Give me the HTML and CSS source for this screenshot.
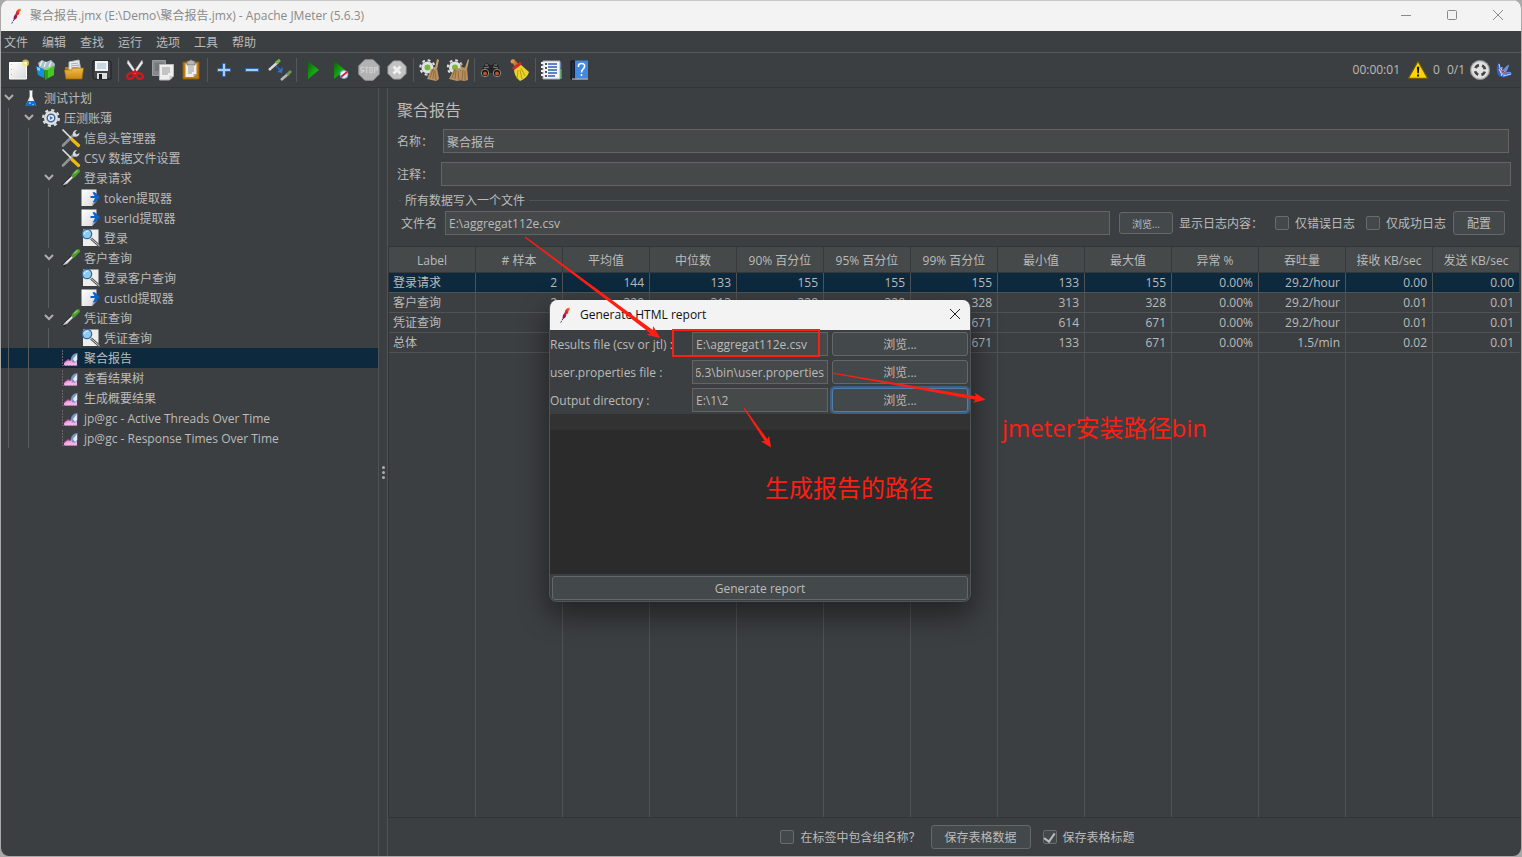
FILE: index.html
```html
<!DOCTYPE html>
<html lang="zh-CN">
<head>
<meta charset="utf-8">
<title>聚合报告.jmx (E:\Demo\聚合报告.jmx) - Apache JMeter (5.6.3)</title>
<link rel="stylesheet" href="styles.css">
</head>
<body>
<svg class="sprite" aria-hidden="true">
  <defs>
    <linearGradient id="g-feather" x1="1" y1="0" x2="0" y2="1"><stop offset="0" stop-color="#f7a01d"/><stop offset=".35" stop-color="#e0342a"/><stop offset=".7" stop-color="#b5173c"/><stop offset="1" stop-color="#4b1d7c"/></linearGradient>
    <linearGradient id="g-green" x1="0" y1="0" x2="1" y2="1"><stop offset="0" stop-color="#0a5f0a"/><stop offset=".5" stop-color="#12a012"/><stop offset="1" stop-color="#19d019"/></linearGradient>
    <linearGradient id="g-folder" x1="0" y1="0" x2="0" y2="1"><stop offset="0" stop-color="#f0bd4e"/><stop offset="1" stop-color="#c98a12"/></linearGradient>
    <linearGradient id="g-paper" x1="0" y1="0" x2="1" y2="1"><stop offset="0" stop-color="#fff"/><stop offset="1" stop-color="#d8d8d8"/></linearGradient>
    <linearGradient id="g-flask" x1="0" y1="0" x2="1" y2="0"><stop offset="0" stop-color="#9aa2a8"/><stop offset=".5" stop-color="#fff"/><stop offset="1" stop-color="#a9b0b5"/></linearGradient>
    <symbol id="i-feather" viewBox="0 0 16 16"><path d="M10.500 1 12.500 .5 13 2.500 11.500 4 11 6.500 9.500 7 8.800 10 6.500 12 5.500 11 6 8 7.500 6 8.500 3Z" fill="url(#g-feather)"/><path d="M6 11.500 3.800 15.500" stroke="#4b1d7c" stroke-dasharray="2 1"/></symbol>
    <symbol id="i-new" viewBox="0 0 24 24"><path d="M3.500 4.500h17v16.500h-17z" fill="url(#g-paper)" stroke="#fff"/><path d="M5.500 6v14" stroke="#bbb" stroke-dasharray="1 4"/><circle cx="19.500" cy="5" r="3.500" fill="#f3e66a" opacity=".75"/><circle cx="19.500" cy="5" r="1.500" fill="#fffbc0"/></symbol>
    <symbol id="i-templates" viewBox="0 0 24 24"><path d="M4 5 8 2l4 2 5-2 4 4-1 6H6Z" fill="#a9bfc6"/><path d="m6 8 2-5M10 9l2-5m3 5 2-5" stroke="#e8eef0" stroke-width="1.500"/><path d="m2 8 8 3v9L4 17Z" fill="#168fdc"/><path d="M3 9l3 1v3l-3-1z" fill="#7ccaf5"/><path d="m10 12 10-4v9l-9 5Z" fill="#25a515"/><path d="m10 12 5-3 5-1-6 4Z" fill="#83df4c"/><path d="m14 12 6-4v9l-6 3Z" fill="#46c727"/></symbol>
    <symbol id="i-open" viewBox="0 0 24 24"><path d="M3 9h5v11H4Z" fill="#b9790c"/><path d="m7 4 10-2 2 11H7Z" fill="#eee" stroke="#bbb"/><path d="m9 6 7-1M9 8l8-1M9 10l8-1" stroke="#aaa"/><path d="M2.500 12h7l1-2h11l-1.500 11H4Z" fill="url(#g-folder)" stroke="#a26b0b" stroke-width=".7"/></symbol>
    <symbol id="i-save" viewBox="0 0 24 24"><path d="M3 3h17l1 1v17H4l-1-1Z" fill="#42464a" stroke="#1e1f20"/><path d="M5 3h13v10H5z" fill="#f0f4f7"/><path d="M7 6h9M7 8h9M7 10h9" stroke="#9db7cd"/><path d="M7 15h10v6H7z" fill="#ddd"/><path d="M9 16h3v5H9z" fill="#1b1c1d"/></symbol>
    <symbol id="i-cut" viewBox="0 0 24 24"><path d="m5 2 9 13-2 1L4 5Zm14 0-9 13 2 1 8-11Z" fill="#ececec" stroke="#999" stroke-width=".5"/><ellipse cx="7.500" cy="18" rx="3.500" ry="2.700" fill="none" stroke="#d8171c" stroke-width="2.200" transform="rotate(-25 7.500 18)"/><ellipse cx="16.500" cy="18" rx="3.500" ry="2.700" fill="none" stroke="#d8171c" stroke-width="2.200" transform="rotate(25 16.500 18)"/><path d="m9 16 3-3 3 3" stroke="#d8171c" stroke-width="2" fill="none"/></symbol>
    <symbol id="i-copy" viewBox="0 0 24 24"><path d="M1.500 2.500h13v15h-13z" fill="#85898a" stroke="#9b9e9f"/><path d="M4 6h8M4 8h8M4 10h8M4 12h8" stroke="#626668"/><path d="M8.500 6.500h14V18l-4 4h-10z" fill="#eee" stroke="#bbb"/><path d="M11 10h8M11 12h8M11 14h8M11 16h6" stroke="#999"/><path d="M18.500 22v-4h4" fill="#ccc"/></symbol>
    <symbol id="i-paste" viewBox="0 0 24 24"><path d="M4 4h16v17H4z" fill="#c17d11" stroke="#8f5902"/><path d="M6.500 5.500h11V16l-3 3h-8z" fill="#f0f0ee"/><path d="M9 9h6M9 11h6M9 13h6M9 15h4" stroke="#999"/><path d="M8 3h2l1-1h2l1 1h2v4H8z" fill="#b5b7b3" stroke="#666" stroke-width=".7"/><path d="m14.500 19v-3h3" fill="#aaa"/></symbol>
    <symbol id="i-plus" viewBox="0 0 24 24"><path d="M10.500 5.500h3v5h5v3h-5v5h-3v-5h-5v-3h5z" fill="#a9ccf3" stroke="#2e68b4"/></symbol>
    <symbol id="i-minus" viewBox="0 0 24 24"><path d="M5.500 10.500h13v3h-13z" fill="#a9ccf3" stroke="#2e68b4"/></symbol>
    <symbol id="i-toggle" viewBox="0 0 24 24"><path d="m1 12 9-8" stroke="#d8dbd8" stroke-width="2.500"/><path d="m8 5 4-3" stroke="#72b64c" stroke-width="3"/><path d="m13 22 7-6" stroke="#b8bbb8" stroke-width="2.500"/><path d="m19 17 4-4" stroke="#72955a" stroke-width="3"/><path d="m8 8 5 5" stroke="#2573d9" stroke-width="1.500" stroke-dasharray="2 1"/><path d="m15 9-1 6-5-1Z" fill="#2573d9"/></symbol>
    <symbol id="i-start" viewBox="0 0 24 24"><path d="M7 3v18l11-9Z" fill="url(#g-green)"/></symbol>
    <symbol id="i-start-np" viewBox="0 0 24 24"><path d="M5 3v18l11-9Z" fill="url(#g-green)"/><circle cx="15" cy="16.500" r="4" fill="#e9f1fb" stroke="#7ba5d8"/><path d="m12 19 6-5" stroke="#d2222a" stroke-width="1.700"/></symbol>
    <symbol id="i-stop" viewBox="-1 -1 26 26"><path d="M7.500 1h9L23 7.500v9L16.500 23h-9L1 16.500v-9Z" fill="#b2b2b2" stroke="#a5a5a5"/><g fill="none" stroke="#cfcfcf" stroke-width="1.300"><path d="M6.500 9.500Q3 8 3 10.500T6 12.500 3 15M7.500 9h4m-2 0v6.500M13 9.500h2.500v5.500H13zM18 15.500V9.500h3V12h-3"/></g></symbol>
    <symbol id="i-shutdown" viewBox="0 0 24 24"><path d="M8.500 3h7L21 8.500v7L15.500 21h-7L3 15.500v-7Z" fill="#c2c2c2" stroke="#a5a5a5"/><path d="m8.500 8.500 7 7m0-7-7 7" stroke="#f1f1f1" stroke-width="2.800"/></symbol>
    <symbol id="i-clear" viewBox="0 0 24 24"><circle cx="9.500" cy="9.500" r="6" fill="#dfe3e4"/><circle cx="9.500" cy="9.500" r="7.200" fill="none" stroke="#dfe3e4" stroke-width="2" stroke-dasharray="2.800 2.850"/><circle cx="9.500" cy="9.500" r="3" fill="#78b83a"/><path d="m17 10 2-9 2 1-2 9Z" fill="#c9a26b"/><path d="m13 11 6-1 2 11-3 2-9-2Z" fill="#b9905d"/><path d="m12 20 3-9m0 10 1-9m2 10-1-9" stroke="#7f5d36" stroke-width=".7"/></symbol>
    <symbol id="i-clear-all" viewBox="0 0 24 24"><circle cx="9" cy="9.500" r="6" fill="#dfe3e4"/><circle cx="9" cy="9.500" r="7.200" fill="none" stroke="#dfe3e4" stroke-width="2" stroke-dasharray="2.800 2.850"/><circle cx="9" cy="9.500" r="3" fill="#78b83a"/><path d="m14 10 1-6 1 1-1 6Zm5 0 3-9 1 1-2 9Z" fill="#c9a26b"/><path d="m8 11 6-1 2 12-5 1-8-2Zm7-1 6-1 1 13-4 1-4-1Z" fill="#b9905d"/><path d="m6 20 3-9m0 10 1-9m3 10-1-9m4 9 1-10m2 10v-9" stroke="#7f5d36" stroke-width=".7"/></symbol>
    <symbol id="i-search" viewBox="0 0 24 24"><path d="M5 7 8 5l3 2 2 0 3-2 3 2 3 8-4 4-5-4h-2l-5 4-4-4Z" fill="#242425"/><path d="M6 7 9 7M15 7h3M5 10l5-1m4 0 5 1" stroke="#888"/><circle cx="6" cy="15" r="3.700" fill="#111" stroke="#8b8b8b"/><circle cx="18" cy="15" r="3.700" fill="#111" stroke="#8b8b8b"/><circle cx="6" cy="15.500" r="2" fill="#b5572a"/><circle cx="18" cy="15.500" r="2" fill="#b5572a"/></symbol>
    <symbol id="i-reset" viewBox="0 0 24 24"><path d="m4 2 3-1 6 7-4 3Z" fill="#c57b28"/><circle cx="5.500" cy="3.500" r="2" fill="#da994c"/><path d="m7 11 6-5 9 8c-1 4-4 7-9 9-4-3-6-7-6-12Z" fill="#e9d32c"/><path d="m10 21 1-9m4 9-2-9m5 6-4-8" stroke="#a98e09" stroke-width=".8"/><path d="m6 11 8-6" stroke="#cf2929" stroke-width="3"/></symbol>
    <symbol id="i-log" viewBox="0 0 24 24"><path d="M18 5h4v5h-4z" fill="#2357b9"/><path d="M18 11h4v10h-4z" fill="#20a33b"/><path d="M3 3h17v18H3z" fill="#f4f5f6" stroke="#aaa"/><path d="M8 6h9M8 9h9M8 12h9M8 15h9M8 18h7" stroke="#315cae" stroke-width="1.300"/><path d="M1 5h5M1 9h5M1 13h5M1 17h5" stroke="#eee" stroke-width="2"/><path d="M5 6h2M5 10h2M5 14h2M5 18h2" stroke="#222" stroke-width="1.500"/></symbol>
    <symbol id="i-help" viewBox="0 0 24 24"><path d="M3 3h4v18H3z" fill="#1d2d48" stroke="#111"/><path d="M7 2.500h13v18H7z" fill="#4289df"/><path d="M4 21h16" stroke="#ddd"/><path d="M10.500 9Q10 5.500 13.500 5.500T16.500 8.500C16.500 11 13.500 11 13.500 14.500M13.500 16v2" fill="none" stroke="#fff" stroke-width="1.600"/></symbol>
    <symbol id="i-warn" viewBox="0 0 24 24"><path d="M12 2.500 22.500 21h-21Z" fill="#ffd400" stroke="#6b5b00" stroke-width="1.300" stroke-linejoin="round"/><path d="M10.800 8.500h2.600l-.5 7h-1.600zM11 17h2.200v2.200H11z" fill="#111"/></symbol>
    <symbol id="i-threads" viewBox="0 0 24 24"><circle cx="12" cy="12" r="10.500" fill="#c9c9c9" stroke="#8b8b8b"/><circle cx="12" cy="12" r="8.800" fill="#e2e2e2"/><circle cx="12" cy="12" r="5.500" fill="none" stroke="#444" stroke-width="3" stroke-dasharray="5 3.640" stroke-dashoffset="-1.800"/></symbol>
    <symbol id="i-wing" viewBox="0 0 18 18"><path d="M4 1.500C1 5 1 11 4 15l5 1.500 7-2.500c1-1 1-1.500 1-2H8Z" fill="#2f62cc"/><path d="m4 3 2 8M7 6l-1 6M12 7l-6 8m10-2-8 2m-4-7 3 6" stroke="#c9dcff"/><path d="M7 10c3-1 4-4 6-5-1 4-2 6-5 8M8 14c3-3 5-3 8-2" fill="none" stroke="#668fe7" stroke-width="1.500"/><path d="m5 8 3 4 3-1" fill="none" stroke="#c44"/></symbol>
    <symbol id="i-flask" viewBox="0 0 20 20"><path d="M8 2.500h4l-.6 1v5L15.500 18h-11L8.600 8.500v-5Z" fill="url(#g-flask)"/><path d="M6.600 13h6.800l2.100 5h-11Z" fill="#1668d8"/><circle cx="9" cy="15" r="1" fill="#8fc0ff"/><circle cx="12" cy="16.500" r=".8" fill="#8fc0ff"/></symbol>
    <symbol id="i-gear" viewBox="0 0 20 20"><circle cx="10" cy="10" r="7.900" fill="none" stroke="#d9dddf" stroke-width="2.200" stroke-dasharray="3.100 3.100"/><circle cx="10" cy="10" r="7" fill="#dfe2e4"/><circle cx="10" cy="10" r="3.800" fill="#e9f0fa" stroke="#4a6894" stroke-width="1.500"/><path d="m8.800 8 3.400 2-3.400 2Z" fill="#3c72c4"/></symbol>
    <symbol id="i-tools" viewBox="0 0 20 20"><path d="m2 17.500 11-11" stroke="#8f9293" stroke-width="2.600" stroke-linecap="round"/><path d="M12 7.500c-1-3 1-5.500 4-5.500l-2 2.500 1.500 2L18.500 5c0 3-3 4.500-5.500 3.500Z" fill="#d5d7d8"/><path d="m1.500 1.500 9 9" stroke="#e3e5e6" stroke-width="1.600"/><path d="m11 11.500 6.500 6" stroke="#f1b80d" stroke-width="3.200" stroke-linecap="round"/></symbol>
    <symbol id="i-dropper" viewBox="0 0 20 20"><path d="M2 18 13 7" stroke="#26282a" stroke-width="3.500"/><path d="M1.500 17.500 4 14.500 12 7l1.500 1.500L6 16Z" fill="#c4c8c6"/><path d="m5 14.500 7-6.500" stroke="#fff"/><path d="m12.500 7.500 4.500-4.500" stroke="#4f9a33" stroke-width="4" stroke-linecap="round"/><path d="m13 5.500 3.500-3" stroke="#8bd06a" stroke-width="1.300"/></symbol>
    <symbol id="i-extract" viewBox="0 0 20 20"><path d="M.5 1.500h15v11.500l-4.500 5h-10.500z" fill="url(#g-paper)"/><path d="m11 18 1-5h3.500" fill="#a9a9a9"/><path d="M9.500 8h4L11.500 4.500l2-.5L19 9l-5 5.500-2-.5 2-4h-4.500z" fill="#0d62ca"/></symbol>
    <symbol id="i-view" viewBox="0 0 20 20"><path d="M2 1.500h15.500v16.500H2z" fill="#eee"/><path d="m10 10.500 8.500 7.500" stroke="#555" stroke-width="2.600"/><path d="m10 10.500 8.500 7.500" stroke="#c9c9c9"/><circle cx="6" cy="6" r="4.700" fill="#8ecbf0" stroke="#37689b" stroke-width="1.200"/><path d="M3.500 6c0-2 2-3 4-3" stroke="#e4f6ff" fill="none"/></symbol>
    <symbol id="i-chart" viewBox="0 0 20 20"><path d="M1.500 2v15.500h15" fill="none" stroke="#74616f" stroke-dasharray="2 1"/><path d="M3 17v-2l4-3 2 1 3-4 4 3v5Z" fill="#efa3df"/><path d="m3 14.500 4-3 2 1 2-2" fill="none" stroke="#b04797"/><path d="M10 11c0-3 3-6 6.500-6v7l-2.500 3-3-1Z" fill="#7993c3"/><path d="m12 11 4-5v6l-2 2Z" fill="#e6eefc"/><path d="M3 17.500h13V14l-3 1-6-.5Z" fill="#f5b4e8"/></symbol>
    <symbol id="i-chevron" viewBox="0 0 16 16"><path d="m4 5 4 4 4-4" fill="none" stroke="#adadad" stroke-width="2"/></symbol>
  </defs>
</svg>

<div class="window">
  <header class="titlebar">
    <svg class="logo"><use href="#i-feather"/></svg>
    <span class="title">聚合报告.jmx (E:\Demo\聚合报告.jmx) - Apache JMeter (5.6.3)</span>
    <button class="winbtn" aria-label="最小化"><svg viewBox="0 0 12 12"><path d="M1 5.500h10"/></svg></button>
    <button class="winbtn" aria-label="最大化"><svg viewBox="0 0 12 12"><rect x="1.500" y=".5" width="9" height="9" rx="1"/></svg></button>
    <button class="winbtn" aria-label="关闭"><svg viewBox="0 0 12 12"><path d="m1 0 10 10M11 0 1 10"/></svg></button>
  </header>

  <nav class="menubar">
    <button>文件</button><button>编辑</button><button>查找</button><button>运行</button><button>选项</button><button>工具</button><button>帮助</button>
  </nav>

  <div class="toolbar">
    <button aria-label="新建"><svg><use href="#i-new"/></svg></button>
    <button aria-label="模板"><svg><use href="#i-templates"/></svg></button>
    <button aria-label="打开"><svg><use href="#i-open"/></svg></button>
    <button aria-label="保存"><svg><use href="#i-save"/></svg></button>
    <i class="sep"></i>
    <button aria-label="剪切"><svg><use href="#i-cut"/></svg></button>
    <button aria-label="复制"><svg><use href="#i-copy"/></svg></button>
    <button aria-label="粘贴"><svg><use href="#i-paste"/></svg></button>
    <i class="sep"></i>
    <button aria-label="展开"><svg><use href="#i-plus"/></svg></button>
    <button aria-label="折叠"><svg><use href="#i-minus"/></svg></button>
    <button aria-label="切换"><svg><use href="#i-toggle"/></svg></button>
    <i class="sep"></i>
    <button aria-label="启动"><svg><use href="#i-start"/></svg></button>
    <button aria-label="不停顿启动"><svg><use href="#i-start-np"/></svg></button>
    <button aria-label="停止" disabled><svg><use href="#i-stop"/></svg></button>
    <button aria-label="关闭线程" disabled><svg><use href="#i-shutdown"/></svg></button>
    <i class="sep"></i>
    <button aria-label="清除"><svg><use href="#i-clear"/></svg></button>
    <button aria-label="清除全部"><svg><use href="#i-clear-all"/></svg></button>
    <i class="sep"></i>
    <button aria-label="搜索"><svg><use href="#i-search"/></svg></button>
    <button aria-label="重置搜索"><svg><use href="#i-reset"/></svg></button>
    <i class="sep"></i>
    <button aria-label="函数助手"><svg><use href="#i-log"/></svg></button>
    <button aria-label="帮助"><svg><use href="#i-help"/></svg></button>
    <div class="status">
      <span>00:00:01</span>
      <svg class="status-icon"><use href="#i-warn"/></svg>
      <span>0</span>
      <span class="threads">0/1</span>
      <svg class="status-icon"><use href="#i-threads"/></svg>
      <svg class="wing"><use href="#i-wing"/></svg>
    </div>
  </div>

  <main class="main">
    <ul class="tree">
      <li><svg class="chev"><use href="#i-chevron"/></svg><svg class="node"><use href="#i-flask"/></svg>测试计划</li>
      <li><i></i><svg class="chev"><use href="#i-chevron"/></svg><svg class="node"><use href="#i-gear"/></svg>压测账薄</li>
      <li><i></i><i></i><b></b><svg class="node"><use href="#i-tools"/></svg>信息头管理器</li>
      <li><i></i><i></i><b></b><svg class="node"><use href="#i-tools"/></svg>CSV 数据文件设置</li>
      <li><i></i><i></i><svg class="chev"><use href="#i-chevron"/></svg><svg class="node"><use href="#i-dropper"/></svg>登录请求</li>
      <li><i></i><i></i><i></i><b></b><svg class="node"><use href="#i-extract"/></svg>token提取器</li>
      <li><i></i><i></i><i></i><b></b><svg class="node"><use href="#i-extract"/></svg>userId提取器</li>
      <li><i></i><i></i><i></i><b></b><svg class="node"><use href="#i-view"/></svg>登录</li>
      <li><i></i><i></i><svg class="chev"><use href="#i-chevron"/></svg><svg class="node"><use href="#i-dropper"/></svg>客户查询</li>
      <li><i></i><i></i><i></i><b></b><svg class="node"><use href="#i-view"/></svg>登录客户查询</li>
      <li><i></i><i></i><i></i><b></b><svg class="node"><use href="#i-extract"/></svg>custId提取器</li>
      <li><i></i><i></i><svg class="chev"><use href="#i-chevron"/></svg><svg class="node"><use href="#i-dropper"/></svg>凭证查询</li>
      <li><i></i><i></i><i></i><b></b><svg class="node"><use href="#i-view"/></svg>凭证查询</li>
      <li class="selected"><i></i><i></i><b></b><svg class="node"><use href="#i-chart"/></svg>聚合报告</li>
      <li><i></i><i></i><b></b><svg class="node"><use href="#i-chart"/></svg>查看结果树</li>
      <li><i></i><i></i><b></b><svg class="node"><use href="#i-chart"/></svg>生成概要结果</li>
      <li><i></i><i></i><b></b><svg class="node"><use href="#i-chart"/></svg>jp@gc - Active Threads Over Time</li>
      <li><i></i><i></i><b></b><svg class="node"><use href="#i-chart"/></svg>jp@gc - Response Times Over Time</li>
    </ul>
    <div class="splitter"><i></i><i></i><i></i></div>

    <section class="panel">
      <div class="form">
        <h1>聚合报告</h1>
        <div class="field name"><label for="name">名称：</label><input id="name" type="text" value="聚合报告"></div>
        <div class="field comment"><label for="comment">注释：</label><input id="comment" type="text"></div>
        <fieldset>
          <legend>所有数据写入一个文件</legend>
          <div class="filerow">
            <label for="file">文件名</label>
            <input id="file" type="text" value="E:\aggregat112e.csv">
            <button class="btn small">浏览...</button>
            <span class="loglabel">显示日志内容：</span>
            <label class="check"><input type="checkbox"><span>仅错误日志</span></label>
            <label class="check"><input type="checkbox"><span>仅成功日志</span></label>
            <button class="btn config">配置</button>
          </div>
        </fieldset>
      </div>

      <div class="tablewrap">
        <table>
          <thead>
            <tr><th>Label</th><th># 样本</th><th>平均值</th><th>中位数</th><th>90% 百分位</th><th>95% 百分位</th><th>99% 百分位</th><th>最小值</th><th>最大值</th><th>异常 %</th><th>吞吐量</th><th>接收 KB/sec</th><th>发送 KB/sec</th></tr>
          </thead>
          <tbody>
            <tr class="selected"><td>登录请求</td><td>2</td><td>144</td><td>133</td><td>155</td><td>155</td><td>155</td><td>133</td><td>155</td><td>0.00%</td><td>29.2/hour</td><td>0.00</td><td>0.00</td></tr>
            <tr><td>客户查询</td><td>2</td><td>320</td><td>313</td><td>328</td><td>328</td><td>328</td><td>313</td><td>328</td><td>0.00%</td><td>29.2/hour</td><td>0.01</td><td>0.01</td></tr>
            <tr><td>凭证查询</td><td></td><td></td><td></td><td></td><td></td><td>671</td><td>614</td><td>671</td><td>0.00%</td><td>29.2/hour</td><td>0.01</td><td>0.01</td></tr>
            <tr><td>总体</td><td></td><td></td><td></td><td></td><td></td><td>671</td><td>133</td><td>671</td><td>0.00%</td><td>1.5/min</td><td>0.02</td><td>0.01</td></tr>
            <tr class="filler"><td></td><td></td><td></td><td></td><td></td><td></td><td></td><td></td><td></td><td></td><td></td><td></td><td></td></tr>
          </tbody>
        </table>
      </div>

      <footer class="actions">
        <label class="check"><input type="checkbox"><span>在标签中包含组名称？</span></label>
        <button class="btn">保存表格数据</button>
        <label class="check"><input type="checkbox" checked><span>保存表格标题</span></label>
      </footer>
    </section>
  </main>
</div>

<div class="dialog" role="dialog" aria-labelledby="dialog-title">
  <div class="dialog-title">
    <svg class="logo"><use href="#i-feather"/></svg>
    <span id="dialog-title">Generate HTML report</span>
    <button class="winbtn" aria-label="关闭"><svg viewBox="0 0 12 12"><path d="m1 0 10 10M11 0 1 10"/></svg></button>
  </div>
  <div class="dialog-form">
    <label for="results">Results file (csv or jtl) :</label><input id="results" type="text" value="E:\aggregat112e.csv"><button class="btn">浏览...</button>
    <label for="props">user.properties file :</label><input id="props" class="scrolled" type="text" value="&lrm;5.6.3\bin\user.properties"><button class="btn">浏览...</button>
    <label for="output">Output directory :</label><input id="output" type="text" value="E:\1\2"><button class="btn focused">浏览...</button>
  </div>
  <div class="console"></div>
  <div class="dialog-actions"><button class="btn">Generate report</button></div>
</div>

<svg class="marks" width="1000" height="460" aria-hidden="true">
  <rect x="673" y="330" width="146" height="26" fill="none" stroke="#ff1e12" stroke-width="2"/>
  <g fill="#ff1e12">
    <path transform="translate(525 237) rotate(36.800)" d="M0-.6 158-2 156-5.500 169 0 156 5.500 158 2 0 .6Z"/>
    <path transform="translate(832 373) rotate(9.900)" d="M0-.6 146-1.800 144-5 156 0 144 5 146 1.800 0 .6Z"/>
    <path transform="translate(744 408) rotate(55.600)" d="M0-.6 39-1.600 37-5 48 0 37 5 39 1.600 0 .6Z"/>
  </g>
</svg>
<p class="note note-output">生成报告的路径</p>
<p class="note note-bin">jmeter安装路径bin</p>
</body>
</html>
```
FILE: styles.css
```css
* { box-sizing: border-box; }

body {
  margin: 0;
  height: 100vh;
  overflow: hidden;
  background: #a9a9a9;
  color: #bbb;
  font: 12px/20px "Open Sans", "Noto Sans CJK SC", sans-serif;
}

button, input { font: inherit; color: inherit; margin: 0; }
button { padding: 0; border: 0; background: none; }
svg { flex: none; display: block; }
.sprite { position: absolute; width: 0; height: 0; }

.window {
  height: calc(100vh - 1px);
  display: flex;
  flex-direction: column;
  margin: 0 1px;
  border-radius: 8px;
  overflow: hidden;
  background: #3c3f41;
}

/* Title bar and menu */
.titlebar {
  height: 31px;
  display: flex;
  align-items: center;
  background: #f3f3f3;
  border-top: 1px solid #c8c8c8;
  color: #8a8a8a;
  padding-left: 7px;
}
.logo { width: 16px; height: 16px; }
.title { flex: 1; padding-left: 6px; }
.winbtn { width: 46px; height: 30px; display: grid; place-items: center; }
.winbtn svg { width: 12px; height: 12px; fill: none; stroke: #8a8a8a; }

.menubar {
  height: 22px;
  display: flex;
  gap: 14px;
  padding: 2px 0 0 3px;
  border-bottom: 1px solid #55585a;
}

/* Toolbar */
.toolbar {
  height: 35px;
  display: flex;
  align-items: center;
  padding-left: 3px;
  border-bottom: 1px solid #323436;
}
.toolbar button { width: 28px; height: 28px; display: grid; place-items: center; }
.toolbar button svg { width: 24px; height: 24px; }
.sep { width: 1px; height: 24px; margin: 0 2px; background: #55585a; }
.status { margin-left: auto; display: flex; align-items: center; padding-right: 8px; }
.status-icon { width: 22px; height: 22px; margin: 0 4px 0 7px; }
.threads { margin-left: 7px; }
.threads + .status-icon { margin-left: 4px; }
.wing { width: 18px; height: 18px; }

.main { flex: 1; min-height: 0; display: flex; }

/* Test plan tree */
.tree {
  width: 378px;
  flex: none;
  list-style: none;
  margin: 0;
  padding: 0;
  border-right: 1px solid #505355;
}
.tree li { height: 20px; display: flex; align-items: flex-start; line-height: 22px; white-space: pre; }
.tree i { width: 13px; height: 20px; margin-left: 7px; border-left: 1px solid #5a5d5f; }
.tree b { width: 16px; }
.tree .chev { width: 16px; height: 16px; align-self: center; }
.tree .node { width: 20px; height: 20px; margin: 0 3px 0 4px; }
.selected { background: #0d293e; }

.splitter {
  width: 9px;
  flex: none;
  display: flex;
  flex-direction: column;
  align-items: center;
  justify-content: center;
  gap: 2px;
  border-right: 1px solid #505355;
}
.splitter i { width: 3px; height: 3px; border-radius: 50%; background: #adadad; }

/* Report panel */
.panel { flex: 1; min-width: 0; display: flex; flex-direction: column; }
.form { padding: 10px 10px 0 9px; }
h1 { margin: 0 0 7px; font-size: 16px; line-height: 24px; font-weight: 400; }

input[type="text"] {
  height: 24px;
  min-width: 0;
  padding: 1px 3px 0;
  border: 1px solid #646464;
  background: #45494a;
  outline: 0;
}
.field { display: flex; align-items: center; margin-bottom: 9px; }
.field label { width: 46px; padding-top: 2px; }
.field input { flex: 1; }
.name input { margin-right: 2px; }
.comment label { width: 44px; }
.comment { margin-bottom: 4px; }

fieldset { margin: 0 2px; padding: 0 4px 0 2px; border: 0; border-top: 1px solid #515456; min-width: 0; }
legend { padding: 1px 4px 0; line-height: 20px; }
.filerow { display: flex; align-items: center; }
.filerow > label:first-child { width: 44px; padding-top: 2px; }
#file { flex: 1; }
.btn {
  height: 24px;
  padding-top: 2px;
  border: 1px solid #646869;
  border-radius: 3px;
  background: #43484a;
  line-height: 20px;
}
.small { width: 54px; height: 22px; margin: 0 6px 0 9px; font-size: 10px; line-height: 18px; }
.loglabel { width: 96px; padding-top: 2px; white-space: nowrap; }
.config { width: 52px; }
.check { display: flex; align-items: center; gap: 6px; white-space: nowrap; }
.check span { padding-top: 2px; }
.filerow .check { margin-right: 7px; }
.filerow .check + .check { margin-left: 4px; }
input[type="checkbox"] {
  appearance: none;
  width: 14px;
  height: 14px;
  border: 1px solid #6b6b6b;
  border-radius: 2px;
  background: #43494a;
  display: flex;
  justify-content: center;
}
input[type="checkbox"]:checked::before {
  content: "";
  width: 5px;
  height: 9px;
  border: solid #bbb;
  border-width: 0 2px 2px 0;
  transform: rotate(35deg);
}

/* Results table */
.tablewrap {
  flex: 1;
  min-height: 0;
  margin-top: 11px;
  padding-right: 1px;
  border: solid #323436;
  border-width: 1px 0 1px 1px;
}
table { width: 100%; height: 100%; table-layout: fixed; border-collapse: separate; border-spacing: 0; }
th, td { padding: 0 5px 0 4px; white-space: nowrap; overflow: hidden; border-right: 1px solid #505355; border-bottom: 1px solid #505355; }
th { height: 26px; padding: 2px 0 0; font-weight: 400; background: #45494a; border-color: #36393b; text-align: center; }
td { height: 20px; line-height: 19px; text-align: right; }
td:first-child { text-align: left; }
.filler td { height: auto; border-bottom: 0; }
th:last-child, td:last-child { border-right-color: #3c3f41; }

.actions { height: 38px; display: flex; align-items: center; justify-content: center; gap: 10px; padding-left: 6px; }
.actions .btn { width: 100px; margin-right: 2px; }

/* Report dialog */
.dialog {
  position: absolute;
  left: 549px;
  top: 300px;
  width: 422px;
  border: 1px solid #515456;
  border-top: 0;
  border-radius: 8px;
  overflow: hidden;
  background: #3c3f41;
  box-shadow: 0 12px 28px 2px rgba(0, 0, 0, .45);
}
.dialog-title { height: 30px; display: flex; align-items: center; padding-left: 7px; background: #f3f3f3; color: #111; }
.dialog-title span { flex: 1; padding-left: 7px; }
.dialog-title .winbtn { width: 30px; }
.dialog-title .winbtn svg { stroke: #222; }
.dialog-form { display: grid; grid-template-columns: 138px 136px 136px; gap: 4px; padding: 2px 0; }
.dialog-form label { padding-top: 2px; line-height: 22px; white-space: nowrap; }
.scrolled { direction: rtl; }
.focused { border-color: #527da8; box-shadow: 0 0 0 2px #3d6185; }
.console { height: 160px; border-top: 16px solid #323232; background: #2b2b2b; }
.dialog-actions { padding: 2px 2px 1px; }
.dialog-actions .btn { display: block; width: 100%; }

/* Callouts */
.marks { position: absolute; left: 0; top: 0; pointer-events: none; }
.note { position: absolute; margin: 0; color: #ff1e12; font-size: 24px; line-height: 32px; white-space: nowrap; }
.note-output { left: 765px; top: 472px; }
.note-bin { left: 1002px; top: 412px; }
```
